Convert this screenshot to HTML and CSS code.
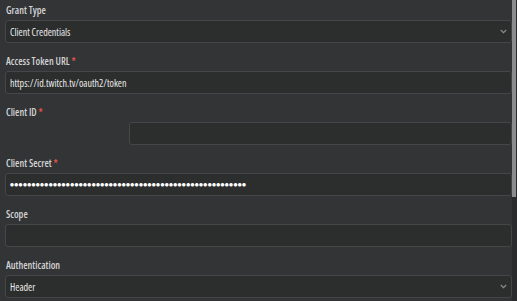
FILE: index.html
```html
<!DOCTYPE html>
<html>
<head>
<meta charset="utf-8">
<link rel="stylesheet" href="styles.css">
</head>
<body>
<div class="frame">
  <form class="form">
    <div class="field">
      <div class="label">Grant Type</div>
      <div class="input select">
        <span class="value">Client Credentials</span>
        <svg class="chev" width="7" height="5" viewBox="0 0 7 5"><path d="M0.8 1 L3.5 3.6 L6.2 1" fill="none" stroke="#8b8c8d" stroke-width="1.2"/></svg>
      </div>
    </div>
    <div class="field">
      <div class="label">Access Token URL <span class="req">*</span></div>
      <div class="input"><span class="value">https://id.twitch.tv/oauth2/token</span></div>
    </div>
    <div class="field">
      <div class="label">Client ID <span class="req">*</span></div>
      <div class="input offset"></div>
    </div>
    <div class="field">
      <div class="label">Client Secret <span class="req">*</span></div>
      <div class="input"><span class="value dots">●●●●●●●●●●●●●●●●●●●●●●●●●●●●●●●●●●●●●●●●●●●●●●●●●●●●●●●</span></div>
    </div>
    <div class="field">
      <div class="label">Scope</div>
      <div class="input"></div>
    </div>
    <div class="field">
      <div class="label">Authentication</div>
      <div class="input select">
        <span class="value">Header</span>
        <svg class="chev" width="7" height="5" viewBox="0 0 7 5"><path d="M0.8 1 L3.5 3.6 L6.2 1" fill="none" stroke="#8b8c8d" stroke-width="1.2"/></svg>
      </div>
    </div>
  </form>
  <div class="scrollbar"><div class="thumb"></div></div>
</div>
</body>
</html>
```
FILE: styles.css
```css
html, body {
  margin: 0;
  padding: 0;
  background: #333436;
  height: 100%;
  overflow: hidden;
}
.frame {
  display: flex;
  height: 301px;
  font-family: "Open Sans", "Noto Sans", sans-serif;
  font-stretch: 87%;
}
.form {
  flex: 1;
  padding: 3px 0 0 5px;
  display: flex;
  flex-direction: column;
  gap: 11px;
  min-width: 0;
}
.field {
  display: flex;
  flex-direction: column;
}
.label {
  height: 14px;
  line-height: 14px;
  margin-bottom: 3px;
  padding-left: 1px;
  font-size: 10px;
  font-weight: 600;
  color: #d2d3d4;
}
.req {
  color: #e5574a;
}
.input {
  box-sizing: border-box;
  height: 23px;
  background: #2c2d2d;
  border: 1px solid #454647;
  border-radius: 3px;
  display: flex;
  align-items: center;
  padding: 0 4px;
}
.input.offset {
  margin-left: 124px;
}
.value {
  font-size: 10px;
  color: #eaebeb;
  white-space: nowrap;
}
.dots {
  font-family: "DejaVu Sans", sans-serif;
  font-size: 4.5px;
  letter-spacing: 0.37px;
  font-stretch: 100%;
  color: #ffffff;
}
.select {
  justify-content: space-between;
}
.scrollbar {
  width: 5px;
  background: #2a2b2c;
  display: flex;
  flex-direction: column;
}
.thumb {
  width: 4px;
  height: 197px;
  background: #8c8c8c;
}
```
